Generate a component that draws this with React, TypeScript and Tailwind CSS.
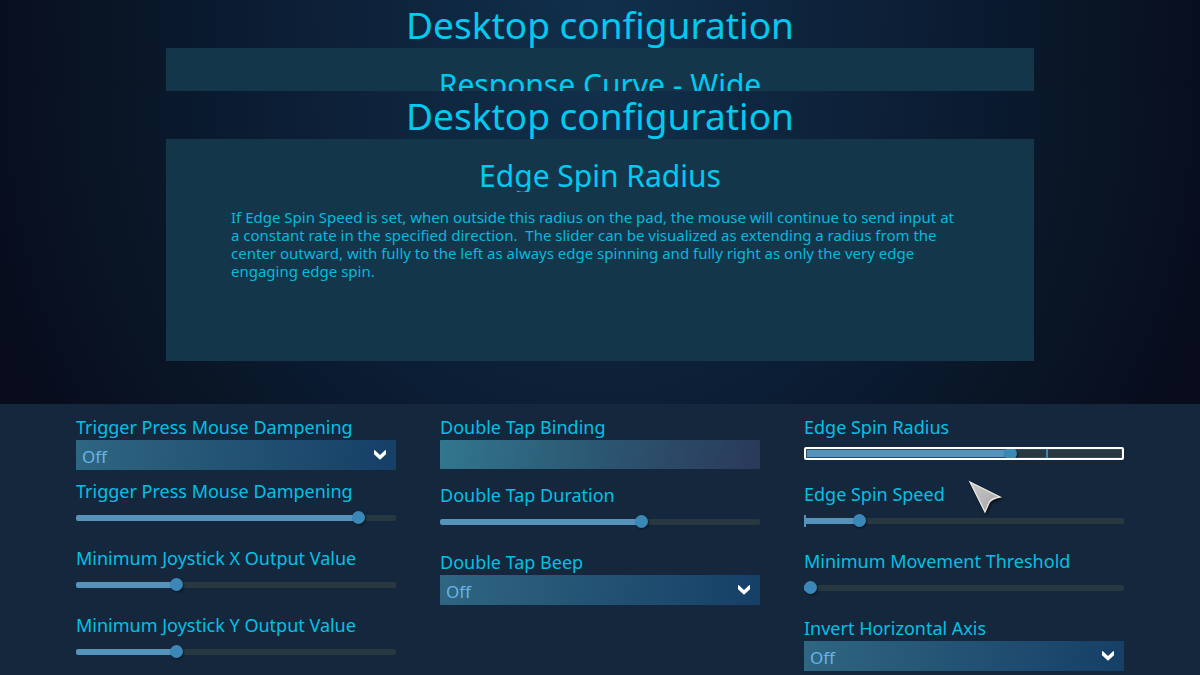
import { useState } from 'react'

const SELECT_OPTIONS = ['Off', 'On']

interface ConfigPanelProps {
  title: string
  heading: string
  text?: string
}

function ConfigPanel({ title, heading, text }: ConfigPanelProps) {
  return (
    <>
      <h1 className="text-center text-[37px] leading-[50px]">{title}</h1>
      <div className="mx-[166px] mt-[-2px] min-h-[222px] bg-[#13364b] pt-[21px] pr-[70px] pl-[65px]">
        <h2 className="mr-[-5px] overflow-hidden text-center text-[30px] leading-[32px]">{heading}</h2>
        {text && <p className="mt-4 text-[15px] leading-[18px] whitespace-pre-wrap text-[#06b9dd]">{text}</p>}
      </div>
    </>
  )
}

interface SliderFieldProps {
  id: string
  label: string
  initial: number
  focused?: boolean
  tick?: 'start' | 'middle'
}

function SliderField({ id, label, initial, focused, tick }: SliderFieldProps) {
  const [value, setValue] = useState(initial)
  // fill stops under the centre of the 13px thumb
  const stop = `calc(7px + (100% - 13px) * ${value / 100})`

  return (
    <div className="flex flex-col pb-[21px]">
      <label htmlFor={id} className="text-lg leading-[26px]">{label}</label>
      <div
        className={
          focused
            ? 'relative mt-[7px] flex h-[13px] items-center overflow-hidden rounded-xs border-2 border-white'
            : 'relative mt-[7px] flex h-[13px] items-center'
        }
      >
        <input
          id={id}
          type="range"
          min={0}
          max={100}
          step={0.5}
          value={value}
          onChange={(e) => setValue(Number(e.target.value))}
          style={{ background: `linear-gradient(to right, #5593bb ${stop}, #283840 ${stop})` }}
          className={`w-full appearance-none outline-none [&::-webkit-slider-thumb]:h-[13px] [&::-webkit-slider-thumb]:w-[13px] [&::-webkit-slider-thumb]:appearance-none [&::-webkit-slider-thumb]:rounded-full [&::-webkit-slider-thumb]:bg-[#3a87b8] [&::-webkit-slider-thumb]:shadow-[1px_1px_2px_#0008] ${
            focused ? 'h-[9px] border border-[#2b4c66]' : 'h-[6px] rounded-xs'
          }`}
        />
        {tick === 'start' && <span className="absolute left-0 h-[12px] w-[2px] bg-[#5593bb]" />}
        {tick === 'middle' && <span className="absolute left-[76%] h-[9px] w-[2px] bg-[#4684ad]" />}
      </div>
    </div>
  )
}

function SelectField({ id, label }: { id: string; label: string }) {
  return (
    <div className="flex flex-col pb-2">
      <label htmlFor={id} className="text-lg leading-[26px]">{label}</label>
      <div className="relative">
        <select
          id={id}
          className="block h-[30px] w-full appearance-none rounded-none bg-linear-[100deg,#2f6682,#255676_40%,#163f67] pt-1 pr-8 pl-[6px] text-[17px] leading-[26px] text-[#67b5e8] outline-none"
        >
          {SELECT_OPTIONS.map(option => (
            <option key={option}>{option}</option>
          ))}
        </select>
        <svg viewBox="0 0 12 10" className="pointer-events-none absolute top-[10px] right-[10px] h-[10px] w-[12px]">
          <path d="M0 0 L1.2 0.6 L6 5 L10.8 0.6 L12 0 V4.2 L6 9.8 L0 4.2 Z" fill="#fff" />
        </svg>
      </div>
    </div>
  )
}

function BindingField({ id, label }: { id: string; label: string }) {
  return (
    <div className="flex flex-col pb-[13px]">
      <label htmlFor={id} className="text-lg leading-[26px]">{label}</label>
      <button
        id={id}
        type="button"
        aria-label={label}
        className="h-[29px] w-full rounded-[1px] bg-linear-[100deg,#31778d,#2c5672_50%,#2a3959]"
      />
    </div>
  )
}

function Cursor() {
  return (
    <svg viewBox="0 0 36 36" className="pointer-events-none absolute top-[76px] right-[196px] h-9 w-9 drop-shadow-[1px_2px_1px_#0009]">
      <defs>
        <linearGradient id="cursor" x1="0" y1="0" x2="1" y2="1">
          <stop offset="0" stopColor="#c9c9c9" />
          <stop offset="1" stopColor="#a4a4a4" />
        </linearGradient>
      </defs>
      <path d="M2 2 L32 17 Q24 18.5 21.5 22 L17 32 Z" fill="url(#cursor)" stroke="#eeeae6" strokeWidth="1.3" />
    </svg>
  )
}

export default function App() {
  return (
    <div className="flex h-screen flex-col overflow-hidden bg-[#14273c] font-['Noto_Sans',sans-serif] text-[#00caf0]">
      {/* Header of the previous setting, cut off by the one below */}
      <header className="h-[91px] shrink-0 overflow-hidden bg-[radial-gradient(ellipse_640px_680px_at_50%_0%,#11304c,#0d2139_40%,#0a1a30_60%,#091626_75%,#080c1d)]">
        <ConfigPanel title="Desktop configuration" heading="Response Curve - Wide" />
      </header>

      <section className="shrink-0 bg-[radial-gradient(ellipse_640px_680px_at_50%_0%,#11304c,#0d2139_40%,#0a1a30_60%,#091626_75%,#080c1d)] pb-[43px]">
        <ConfigPanel
          title="Desktop configuration"
          heading="Edge Spin Radius"
          text="If Edge Spin Speed is set, when outside this radius on the pad, the mouse will continue to send input at a constant rate in the specified direction.  The slider can be visualized as extending a radius from the center outward, with fully to the left as always edge spinning and fully right as only the very edge engaging edge spin."
        />
      </section>

      {/* Settings */}
      <main className="relative grid grow grid-cols-3 gap-11 px-[76px] pt-[10px] text-[#04c0e4]">
        <div className="flex flex-col">
          <SelectField id="trigger-dampening-mode" label="Trigger Press Mouse Dampening" />
          <SliderField id="trigger-dampening" label="Trigger Press Mouse Dampening" initial={90} />
          <SliderField id="joystick-x" label="Minimum Joystick X Output Value" initial={30.5} />
          <SliderField id="joystick-y" label="Minimum Joystick Y Output Value" initial={30.5} />
        </div>
        <div className="flex flex-col">
          <BindingField id="tap-binding" label="Double Tap Binding" />
          <SliderField id="tap-duration" label="Double Tap Duration" initial={63.5} />
          <SelectField id="tap-beep" label="Double Tap Beep" />
        </div>
        <div className="flex flex-col">
          <SliderField id="spin-radius" label="Edge Spin Radius" initial={65.5} focused tick="middle" />
          <SliderField id="spin-speed" label="Edge Spin Speed" initial={16} tick="start" />
          <SliderField id="move-threshold" label="Minimum Movement Threshold" initial={0} />
          <SelectField id="invert-axis" label="Invert Horizontal Axis" />
        </div>
        <Cursor />
      </main>
    </div>
  )
}
